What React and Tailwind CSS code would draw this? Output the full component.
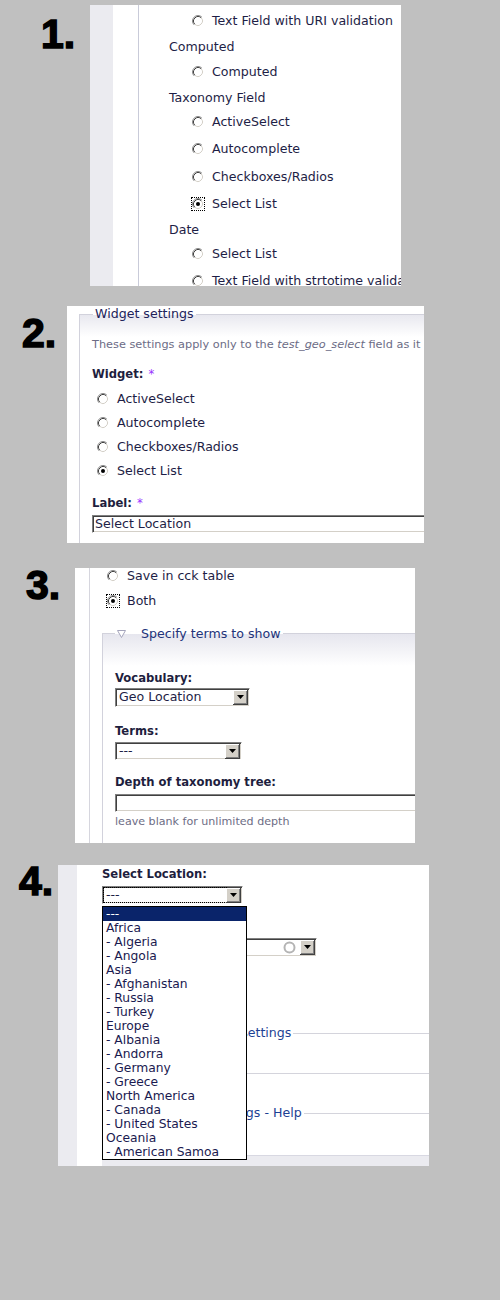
import React from 'react';

const font = "font-['DejaVu_Sans',Verdana,sans-serif]";

const Radio = ({ checked, focus }) => (
  <span className={`inline-flex shrink-0 ${focus ? 'outline-1 outline-dotted outline-black' : ''}`}>
    <svg width="12" height="12" viewBox="0 0 12 12">
      <circle cx="6" cy="6" r="5" fill="#fff" />
      <path d="M2.11 9.89A5.5 5.5 0 0 1 9.89 2.11" stroke="#8c8c8c" fill="none" />
      <path d="M2.82 9.18A4.5 4.5 0 0 1 9.18 2.82" stroke="#404040" fill="none" />
      <path d="M9.18 2.82A4.5 4.5 0 0 1 2.82 9.18" stroke="#d4d0c8" fill="none" />
      {checked && <circle cx="6" cy="6" r="2" fill="#000" />}
    </svg>
  </span>
);

const DropBtn = () => (
  <span className="flex h-[15px] w-[15px] shrink-0 items-center justify-center border-r border-b border-r-[#404040] border-b-[#404040] bg-[#d4d0c8] shadow-[inset_1px_1px_0_#ffffff,inset_-1px_-1px_0_#808080]">
    <svg width="7" height="4" viewBox="0 0 7 4">
      <path d="M0 0h7L3.5 4z" fill="#000" />
    </svg>
  </span>
);

const Select = ({ w, h, focus, children }) => (
  <div className={`flex ${w} ${h} items-center border border-[#808080] border-r-white border-b-white bg-white p-[1px] shadow-[inset_1px_1px_0_#404040,inset_-1px_-1px_0_#d4d0c8]`}>
    <span className={`flex h-full min-w-0 flex-1 items-center pl-[2px] text-[12.6px] text-[#1e1e46] ${focus ? 'outline-1 outline-dotted outline-black' : ''}`}>
      {children}
    </span>
    <DropBtn />
  </div>
);

const TextInput = ({ children }) => (
  <div className="flex h-[18px] w-[420px] items-center border border-[#808080] border-r-white border-b-white bg-white pl-[2px] text-[12.6px] text-[#1e1e46] shadow-[inset_1px_1px_0_#404040,inset_-1px_-1px_0_#d4d0c8]">
    {children}
  </div>
);

const Label = ({ children, req, mt }) => (
  <div className={`flex h-[16px] items-center whitespace-nowrap text-[11.6px] font-bold text-[#1e1e3e] ${mt}`}>
    {children}
    {req && <span className="ml-[5px] font-normal text-[#9933ff]">*</span>}
  </div>
);

const Num = ({ n, cls }) => (
  <div className={`shrink-0 font-['Liberation_Sans',Arial,sans-serif] text-[41px] leading-none font-bold text-black [-webkit-text-stroke:1.5px_#000] ${cls}`}>
    {n}.
  </div>
);

const rows1 = [
  ['mt-[8px]', 'r', 'Text Field with URI validation'],
  ['mt-[10px]', 'h', 'Computed'],
  ['mt-[9px]', 'r', 'Computed'],
  ['mt-[10px]', 'h', 'Taxonomy Field'],
  ['mt-[8px]', 'r', 'ActiveSelect'],
  ['mt-[11px]', 'r', 'Autocomplete'],
  ['mt-[12px]', 'r', 'Checkboxes/Radios'],
  ['mt-[11px]', 'r', 'Select List', true],
  ['mt-[10px]', 'h', 'Date'],
  ['mt-[8px]', 'r', 'Select List'],
  ['mt-[11px]', 'r', 'Text Field with strtotime validation'],
];

const widgets = ['ActiveSelect', 'Autocomplete', 'Checkboxes/Radios', 'Select List'];

const locations = [
  '---', 'Africa', '- Algeria', '- Angola', 'Asia', '- Afghanistan', '- Russia', '- Turkey',
  'Europe', '- Albania', '- Andorra', '- Germany', '- Greece', 'North America', '- Canada',
  '- United States', 'Oceania', '- American Samoa',
];

const PanelOne = () => (
  <div className="flex h-[281px] w-[311px] overflow-hidden bg-white">
    <div className="w-[23px] shrink-0 bg-[#ebebf0]" />
    <div className="w-[25px] shrink-0" />
    <div className="min-w-0 flex-1 border-l border-[#c9cbd9]">
      {rows1.map(([mt, type, text, sel], i) => (
        <div key={i} className={`flex h-[16px] items-center whitespace-nowrap text-[12.6px] text-[#1e1e46] ${mt} ${type === 'h' ? 'pl-[30px]' : 'pl-[53px]'}`}>
          {type === 'r' && <Radio checked={sel} focus={sel} />}
          <span className={type === 'r' ? 'ml-[8px]' : ''}>{text}</span>
        </div>
      ))}
    </div>
  </div>
);

const PanelTwo = () => (
  <div className="h-[237px] w-[357px] overflow-hidden bg-white pl-[12px]">
    <fieldset className="w-[420px] border-t border-l border-[#d2d2dc] bg-[linear-gradient(to_bottom,#e8e8ef,#ffffff_22px)] pb-[40px] pl-[12px]">
      <legend className="ml-[1px] px-[2px] text-[12.6px] leading-[16px] text-[#22225a]">Widget settings</legend>
      <div className="mt-[14px] flex h-[18px] items-center whitespace-nowrap text-[11.3px] text-[#6c6c86]">
        These settings apply only to the&nbsp;<em>test_geo_select</em>&nbsp;field as it appears in the Location content type.
      </div>
      <Label req mt="mt-[13px]">Widget:</Label>
      <div className="mt-[4px]">
        {widgets.map((w, i) => (
          <div key={w} className="flex h-[24px] items-center pl-[5px] text-[12.6px] text-[#1e1e46]">
            <Radio checked={i === 3} />
            <span className="ml-[8px]">{w}</span>
          </div>
        ))}
      </div>
      <Label req mt="mt-[13px]">Label:</Label>
      <div className="mt-[3px]">
        <TextInput>Select Location</TextInput>
      </div>
    </fieldset>
  </div>
);

const PanelThree = () => (
  <div className="flex h-[275px] w-[340px] overflow-hidden bg-white">
    <div className="w-[15px] shrink-0 border-r border-[#d6d6de]" />
    <div className="min-w-0 flex-1 pl-[12px]">
      <div className="flex h-[16px] items-center pl-[5px] text-[12.6px] text-[#1e1e46]">
        <Radio />
        <span className="ml-[8px]">Save in cck table</span>
      </div>
      <div className="mt-[9px] flex h-[16px] items-center pl-[5px] text-[12.6px] text-[#1e1e46]">
        <Radio checked focus />
        <span className="ml-[8px]">Both</span>
      </div>
      <fieldset className="mt-[16px] w-[420px] border-t border-l border-[#d2d2dc] bg-[linear-gradient(to_bottom,#e6e6ee,#ffffff_32px)] pb-[40px] pl-[12px]">
        <legend className="px-[2px] leading-[16px]">
          <span className="inline-flex items-center text-[12.6px] text-[#22337a]">
            <svg width="9" height="8" viewBox="0 0 9 8">
              <path d="M0.5 0.5h8L4.5 7.5z" fill="#fff" stroke="#a4a4bc" />
            </svg>
            <span className="ml-[15px]">Specify terms to show</span>
          </span>
        </legend>
        <Label mt="mt-[29px]">Vocabulary:</Label>
        <div className="mt-[1px]">
          <Select w="w-[135px]" h="h-[19px]">Geo Location</Select>
        </div>
        <Label mt="mt-[17px]">Terms:</Label>
        <div className="mt-[2px]">
          <Select w="w-[127px]" h="h-[18px]">---</Select>
        </div>
        <Label mt="mt-[15px]">Depth of taxonomy tree:</Label>
        <div className="mt-[3px]">
          <TextInput />
        </div>
        <div className="mt-[3px] flex h-[14px] items-center whitespace-nowrap text-[11.1px] text-[#6d6d85]">
          leave blank for unlimited depth
        </div>
      </fieldset>
    </div>
  </div>
);

const PanelFour = () => (
  <div className="relative flex h-[301px] w-[371px] overflow-hidden bg-white">
    <div className="w-[19px] shrink-0 bg-[#ebebf0]" />
    <div className="flex min-w-0 flex-1 flex-col pl-[25px]">
      <Label mt="mt-[2px]">Select Location:</Label>
      <div className="mt-[3px]">
        <Select w="w-[141px]" h="h-[18px]" focus>---</Select>
      </div>
      <div className="mt-[34px] flex h-[19px] w-[215px] items-center justify-end border border-[#808080] border-r-white border-b-white bg-white p-[1px] shadow-[inset_1px_1px_0_#404040,inset_-1px_-1px_0_#d4d0c8]">
        <svg width="13" height="13" viewBox="0 0 13 13" className="mr-[4px]">
          <circle cx="6.5" cy="6.5" r="5" fill="none" stroke="#b4b4b4" strokeWidth="2" />
        </svg>
        <DropBtn />
      </div>
      <div className="mt-[68px] flex h-[16px] items-center whitespace-nowrap text-[12.6px] text-[#1c3f94]">
        <span className="ml-[95px]">Global settings</span>
        <div className="ml-[2px] h-px flex-1 bg-[#d4d4dc]" />
      </div>
      <div className="mt-[32px] h-px bg-[#d4d4dc]" />
      <div className="mt-[32px] flex h-[16px] items-center whitespace-nowrap text-[12.6px] text-[#1c3f94]">
        <span className="ml-[64px]">Global settings - Help</span>
        <div className="ml-[2px] h-px flex-1 bg-[#d4d4dc]" />
      </div>
      <div className="mt-[33px] h-[20px] border-t border-[#d8d8e2] bg-[#ebebf0]" />
    </div>
    <ul className="absolute top-[41px] left-[44px] w-[145px] border border-black bg-white">
      {locations.map((l, i) => (
        <li key={i} className={`flex h-[14px] items-center pl-[3px] text-[12.3px] whitespace-nowrap ${i === 0 ? 'bg-[#0a246a] text-white' : 'text-[#1a1a50]'}`}>
          {l}
        </li>
      ))}
    </ul>
  </div>
);

export default function App() {
  return (
    <div className={`flex h-[1300px] w-[500px] flex-col overflow-hidden bg-[#c0c0c0] pt-[5px] ${font}`}>
      <div className="flex items-start">
        <Num n="1" cls="mt-[9px] ml-[41px] w-[49px]" />
        <PanelOne />
      </div>
      <div className="mt-[20px] flex items-start">
        <Num n="2" cls="mt-[7px] ml-[22px] w-[45px]" />
        <PanelTwo />
      </div>
      <div className="mt-[25px] flex items-start">
        <Num n="3" cls="mt-[-3px] ml-[26px] w-[49px]" />
        <PanelThree />
      </div>
      <div className="mt-[22px] flex items-start">
        <Num n="4" cls="mt-[-4px] ml-[19px] w-[39px]" />
        <PanelFour />
      </div>
    </div>
  );
}
